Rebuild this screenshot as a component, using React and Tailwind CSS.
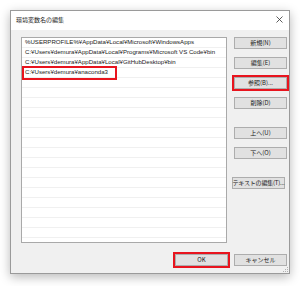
import React from "react";

const font = { fontFamily: '"Noto Sans CJK JP", "Noto Sans", sans-serif' };
const listFont = { fontFamily: '"Liberation Sans", "Noto Sans CJK JP", sans-serif' };

function Btn({ children, className = "" }) {
  return (
    <div
      className={
        "h-[12px] w-[53px] flex items-center justify-center bg-[#e1e1e1] border border-[#adadad] text-[6px] leading-none text-[#222] whitespace-nowrap " +
        className
      }
    >
      {children}
    </div>
  );
}

const rows = [
  "%USERPROFILE%¥AppData¥Local¥Microsoft¥WindowsApps",
  "C:¥Users¥demura¥AppData¥Local¥Programs¥Microsoft VS Code¥bin",
  "C:¥Users¥demura¥AppData¥Local¥GitHubDesktop¥bin",
  "C:¥Users¥demura¥anaconda3",
];

export default function App() {
  const empty = Array.from({ length: 16 });
  return (
    <div className="w-[300px] h-[286px] bg-white pt-[10px] pl-[10px]" style={font}>
      <div className="w-[280px] h-[264px] border border-[#9a9a9a] bg-[#f0f0f0] flex flex-col shadow-[0_3px_10px_rgba(0,0,0,0.28)]">
        <div className="h-[19px] bg-white flex items-center justify-between pl-[5px] pr-[5px] pb-[2px]">
          <span className="text-[6px] leading-none text-[#222]">環境変数名の編集</span>
          <svg width="7" height="7" viewBox="0 0 7 7" className="mr-[1px]">
            <path d="M0.5 0.5 L6.5 6.5 M6.5 0.5 L0.5 6.5" stroke="#333" strokeWidth="0.8" />
          </svg>
        </div>
        <div className="flex-1 flex flex-col pt-[7px] pl-[10px] pr-[2px] relative">
          <div className="flex gap-[7px]">
            <div className="w-[206px] h-[206px] bg-white border border-[#a9a9a9] overflow-hidden" style={listFont}>
              {rows.map((r, i) => (
                <div
                  key={i}
                  className="h-[10px] border-b border-[#f0f0f0] flex items-center pl-[3px] text-[6.1px] leading-none text-[#1a1a1a] whitespace-nowrap relative"
                >
                  {r}
                  {i === 3 && (
                    <div className="absolute left-0 top-[-2px] w-[95px] h-[14px] border-2 border-[#e8141e]" />
                  )}
                </div>
              ))}
              {empty.map((_, i) => (
                <div key={"e" + i} className="h-[10px] border-b border-[#f0f0f0]" />
              ))}
            </div>
            <div className="flex flex-col">
              <Btn>新規(N)</Btn>
              <Btn className="mt-[8px]">編集(E)</Btn>
              <Btn className="mt-[8px] outline-2 outline-[#e8141e]">参照(B)...</Btn>
              <Btn className="mt-[8px]">削除(D)</Btn>
              <Btn className="mt-[18px]">上へ(U)</Btn>
              <Btn className="mt-[8px]">下へ(O)</Btn>
              <Btn className="mt-[18px] -ml-[2px] text-[5.4px] tracking-[-0.2px]">テキストの編集(T)...</Btn>
            </div>
          </div>
          <div className="flex justify-end gap-[6px] mt-[11px]">
            <Btn className="w-[52px] outline-2 outline-[#e8141e]">OK</Btn>
            <Btn>キャンセル</Btn>
          </div>
          <svg width="5" height="5" viewBox="0 0 5 5" className="absolute right-[1px] bottom-[1px]">
            <rect x="4" y="0" width="1" height="1" fill="#b0b0b0" />
            <rect x="2" y="2" width="1" height="1" fill="#b0b0b0" />
            <rect x="4" y="2" width="1" height="1" fill="#b0b0b0" />
            <rect x="0" y="4" width="1" height="1" fill="#b0b0b0" />
            <rect x="2" y="4" width="1" height="1" fill="#b0b0b0" />
            <rect x="4" y="4" width="1" height="1" fill="#b0b0b0" />
          </svg>
        </div>
      </div>
    </div>
  );
}
